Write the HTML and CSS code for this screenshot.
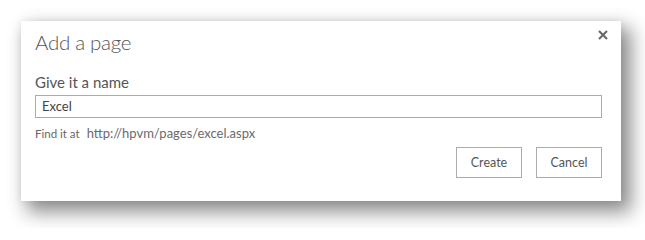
FILE: index.html
```html
<!DOCTYPE html>
<html>
<head>
<meta charset="utf-8">
<link rel="stylesheet" href="styles.css">
</head>
<body>
<div class="dialog">
  <div class="header">
    <h1 class="title">Add a page</h1>
    <button class="close" aria-label="Close">
      <svg width="10" height="10" viewBox="0 0 10 10"><path d="M1 1 L9 9 M9 1 L1 9" stroke="#666" stroke-width="2" fill="none"/></svg>
    </button>
  </div>
  <label class="label" for="name">Give it a name</label>
  <div class="input">Excel</div>
  <div class="find"><span class="find-label">Find it at</span><span class="url">http://hpvm/pages/excel.aspx</span></div>
  <div class="actions">
    <button class="btn">Create</button>
    <button class="btn">Cancel</button>
  </div>
</div>
</body>
</html>
```
FILE: styles.css
```css
html, body {
  margin: 0;
  padding: 0;
  background: #fff;
}
body {
  box-sizing: border-box;
  min-height: 228px;
  padding: 21px 0 0 21px;
  font-family: "Lato", "Open Sans", sans-serif;
  color: #444;
}
.dialog {
  box-sizing: border-box;
  width: 600px;
  height: 180px;
  background: #fff;
  padding: 6px 19px 0 14px;
  box-shadow: 8px 9px 18px 2px rgba(0,0,0,0.45), 0 0 8px rgba(0,0,0,0.07);
}
.header {
  display: flex;
  justify-content: space-between;
  align-items: flex-start;
}
.title {
  margin: 0;
  font-weight: 300;
  font-size: 20.5px;
  line-height: 30px;
  letter-spacing: -0.3px;
  color: #555;
}
.close {
  border: 0;
  background: none;
  padding: 0;
  margin: 3px -6px 0 0;
  width: 10px;
  height: 10px;
  display: flex;
}
.label {
  display: block;
  margin-top: 15px;
  font-size: 15px;
  line-height: 20px;
  color: #555;
}
.input {
  box-sizing: border-box;
  margin-top: 3px;
  height: 23px;
  border: 1px solid #ababab;
  padding: 0 6px;
  font-size: 13px;
  line-height: 21px;
  color: #444;
}
.find {
  display: flex;
  align-items: baseline;
  margin-top: 6px;
  line-height: 18px;
}
.find-label {
  font-size: 11.5px;
  color: #666;
  margin-right: 7px;
}
.url {
  font-size: 13px;
  color: #6a6a6a;
}
.actions {
  display: flex;
  justify-content: flex-end;
  gap: 14px;
  margin-top: 4px;
}
.btn {
  box-sizing: border-box;
  width: 66px;
  height: 31px;
  border: 1px solid #ababab;
  background: #fff;
  font-family: "Lato", "Open Sans", sans-serif;
  font-size: 12.5px;
  color: #555;
  padding: 0;
}
```
